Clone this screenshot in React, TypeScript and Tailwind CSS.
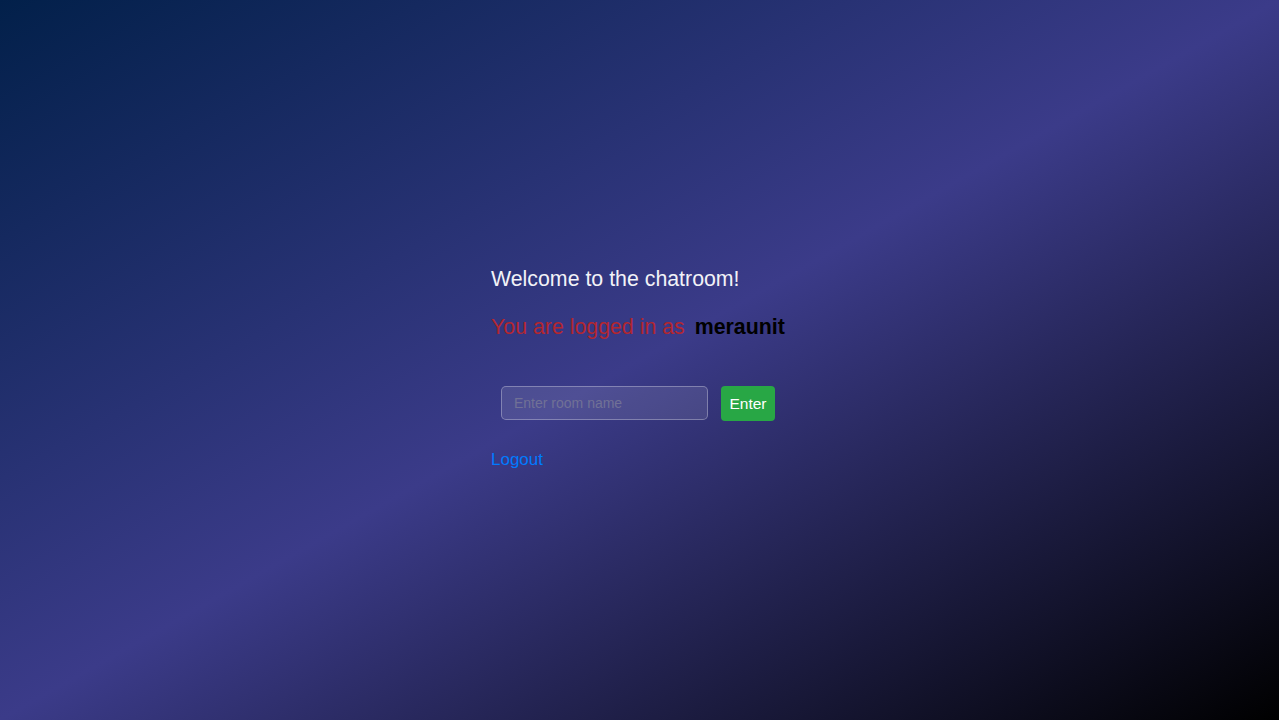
import React from "react";

export default function App() {
  return (
    <div
      className="min-h-screen w-full bg-[linear-gradient(to_bottom_right,#02204a,#3b3b89_50%,#000000)] pt-[267px]"
      style={{ fontFamily: '"Liberation Sans", Arial, sans-serif' }}
    >
      <div className="mx-auto flex w-[297px] flex-col items-start">
        <h2 className="text-[21.33px] leading-[24px] text-[#f2f2f7] font-normal">
          Welcome to the chatroom!
        </h2>
        <div className="mt-[24px] flex items-baseline gap-[10px] text-[21.33px] leading-[24px] whitespace-nowrap">
          <span className="text-[#b3262f]">You are logged in as</span>
          <span className="font-bold text-black">meraunit</span>
        </div>
        <div className="mt-[47px] ml-[10px] flex items-start gap-[13px]">
          <input
            type="text"
            placeholder="Enter room name"
            className="h-[34px] w-[207px] rounded-[5px] border border-white/30 bg-white/10 px-[12px] text-[14px] text-white outline-none placeholder:text-[#717196]"
          />
          <button className="h-[35px] w-[54px] rounded-[4px] bg-[#28a745] text-[15.5px] text-white">
            Enter
          </button>
        </div>
        <a href="#" className="mt-[29px] text-[17px] leading-[20px] text-[#007bff]">
          Logout
        </a>
      </div>
    </div>
  );
}
